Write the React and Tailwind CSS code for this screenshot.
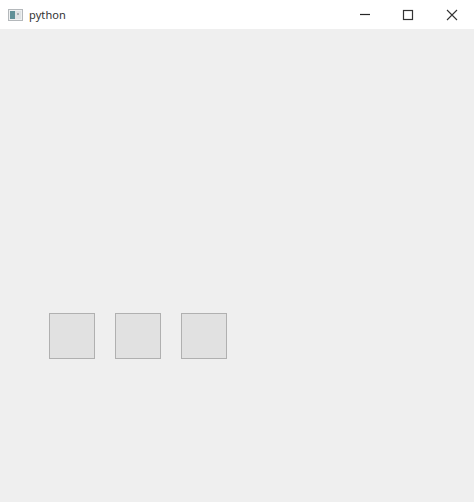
import React from 'react';

const cells = [0, 1, 2];

const AppIcon = () => (
    <svg width="15" height="12" viewBox="0 0 15 12" className="block">
        <rect x="0.5" y="0.5" width="14" height="11" fill="#eef0f1" stroke="#b4b8bb" />
        <rect x="2" y="2" width="5" height="8" fill="#5f9098" />
        <rect x="7" y="2" width="6" height="8" fill="#dfe3e5" />
        <rect x="9" y="4" width="2" height="2" fill="#a9afb3" />
    </svg>
);

const MinIcon = () => (
    <svg width="12" height="12" viewBox="0 0 12 12" className="block">
        <path d="M1 5.5h10" stroke="#262626" strokeWidth="1.2" fill="none" />
    </svg>
);

const MaxIcon = () => (
    <svg width="12" height="12" viewBox="0 0 12 12" className="block">
        <rect x="1.5" y="1.5" width="9" height="9" stroke="#333333" strokeWidth="1.2" fill="none" />
    </svg>
);

const CloseIcon = () => (
    <svg width="12" height="12" viewBox="0 0 12 12" className="block">
        <path d="M1 1l10 10M11 1L1 11" stroke="#333333" strokeWidth="1.1" fill="none" />
    </svg>
);

export default function App() {
    return (
        <div className="w-[474px] h-[502px] flex flex-col bg-[#efefef] font-['Noto_Sans','Open_Sans',sans-serif] overflow-hidden">
            {/* Title bar */}
            <div className="h-[29px] shrink-0 bg-white flex items-center">
                <div className="ml-[8px] w-[15px]"><AppIcon /></div>
                <span className="ml-[6px] text-[11px] tracking-[0.1px] leading-none text-[#333333]">python</span>
                <div className="ml-auto flex items-center">
                    <div className="w-[44px] flex justify-center pl-[1px]"><MinIcon /></div>
                    <div className="w-[44px] flex justify-center"><MaxIcon /></div>
                    <div className="w-[44px] flex justify-center"><CloseIcon /></div>
                </div>
            </div>

            {/* Window body */}
            <div className="flex-1 flex gap-[20px] pl-[49px] pt-[284px] items-start">
                {cells.map(i => (
                    <div key={i} className="w-[46px] h-[46px] bg-[#e1e1e1] border border-[#b0b0b0]" />
                ))}
            </div>
        </div>
    );
}
